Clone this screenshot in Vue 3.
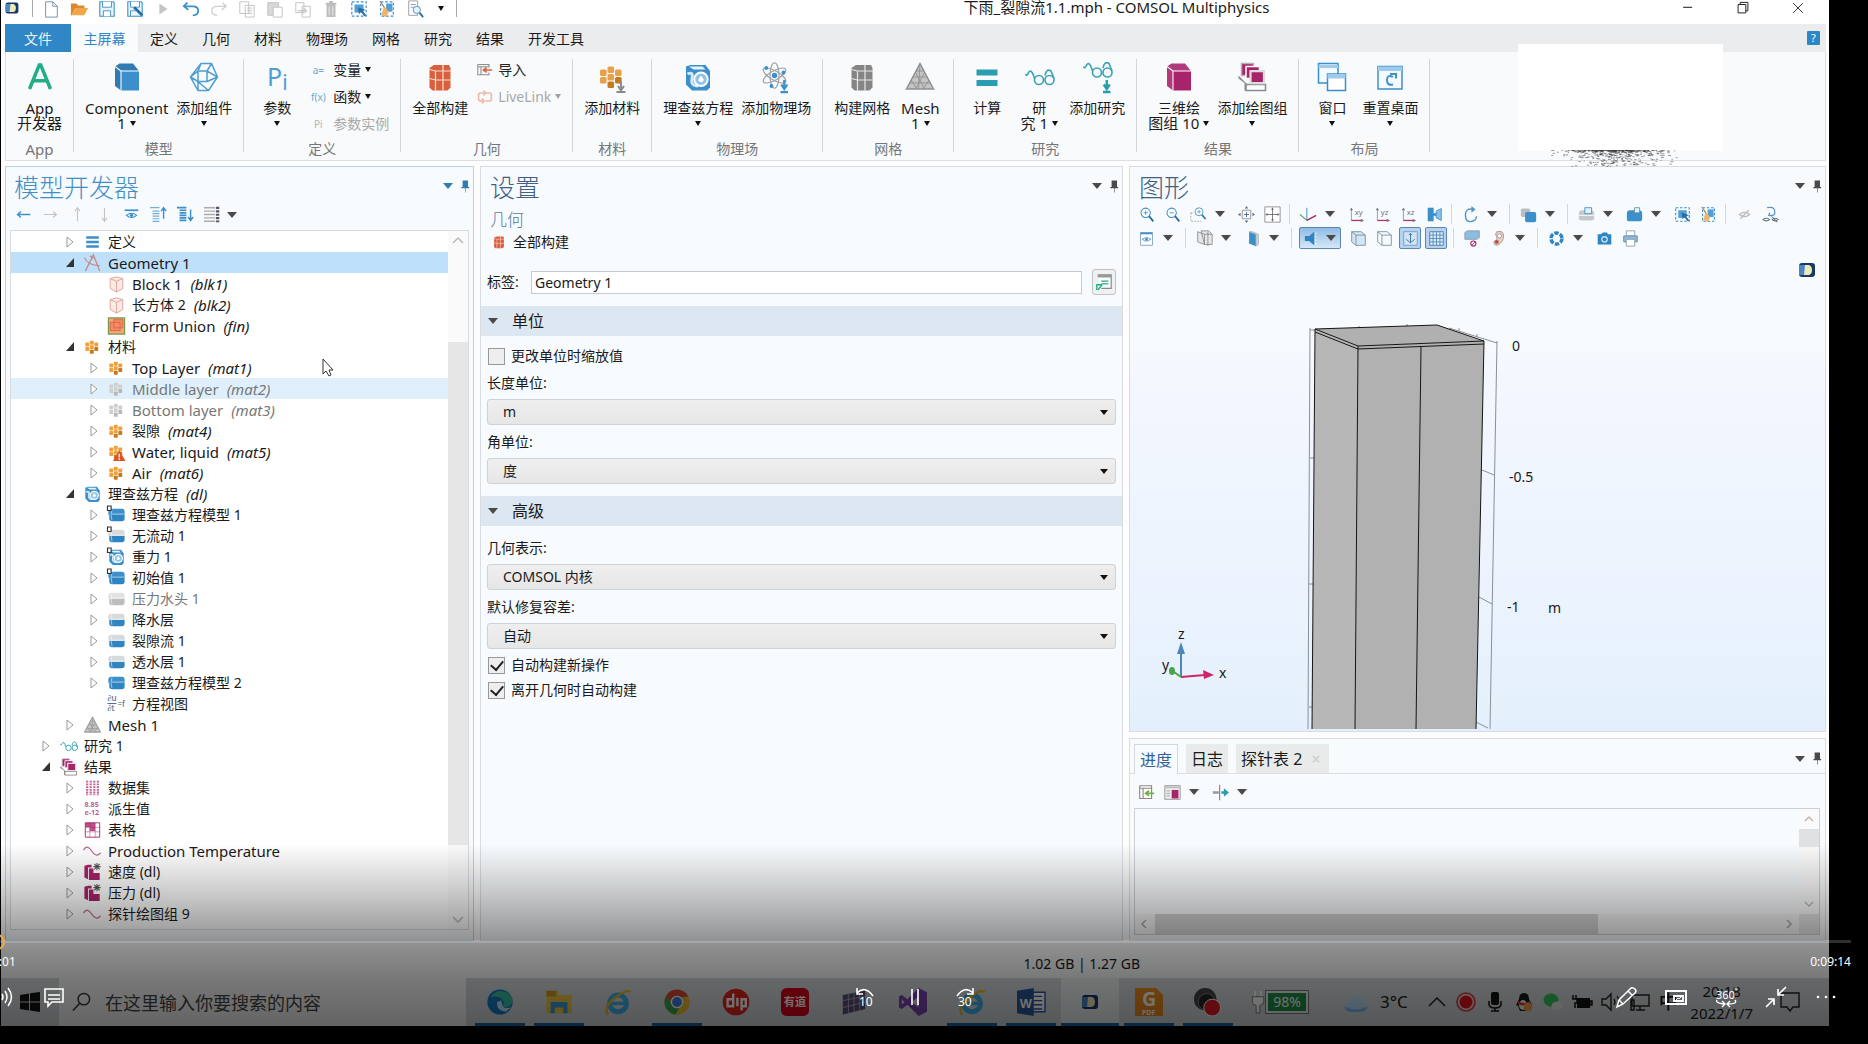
<script setup>
import { ref } from 'vue'

const B = '#3b8fcb'
const G = '#8a8a8a'
const M = '#a8246a'

const dots = (c, d) =>
  [[7, 3], [2, 5], [12, 5], [7, 8], [2, 10], [12, 10], [7, 13]]
    .map(([x, y], i) => `<rect x="${x}" y="${y}" width="4.4" height="4.4" rx="1" fill="${i > 4 ? d : c}"/>`)
    .join('')
const cube = (f, s) =>
  `<path d="M2 3l4 3v13l-4-3zM2 3l3-2h9l4 5H6z" fill="${s}"/><path d="M6 6h12v13H6z" fill="${f}"/><path d="M2 3l4 3v13M6 6h12" stroke="#fff" stroke-width=".7" fill="none"/>`
const grid = (c) =>
  `<path d="M3 4l3-2h10l1 2v13l-2 2H5l-2-2z" fill="${c}"/><path d="M3 5l4 1h10M7 6v13M12 2v17M7 12h10M3 11l4 1" stroke="#fff" stroke-opacity=".8" stroke-width=".8" fill="none"/>`
const tank = (top, bottom) =>
  `<path d="M1 6q0-3 3-3h12q3 0 3 3v4H1z" fill="${top}"/><path d="M2 10h17v4q0 3-3 3H5q-3 0-3-3z" fill="${bottom}"/><path d="M5 9h13M5 4q-2 5 0 12" stroke="#fff" stroke-opacity=".6" fill="none"/>`
const mark = '<path d="M0 0h4v5H0z" fill="#fff" stroke="#333" stroke-width="1.300"/>'
const globe =
  '<path d="M2 3l3-1h10l3 4v11l-2 2H6l-4-4z" fill="#3b8fcb"/><path d="M4 3h9l2 2H7z" fill="#e8f4fc"/><path d="M3 8q4-2 3 3t4 5" stroke="#d2e9f8" stroke-width="2" fill="none"/><circle cx="12" cy="11.500" r="4.500" fill="#8cc4ea" stroke="#fff" stroke-width="1.300"/><path d="M10 12l2-3 2 3q-2 3-4 0" fill="#fff"/>'
const mesh =
  '<path d="M10 1l9 17H1z" fill="#c4c4c4" stroke="#909090"/><path d="M7.500 6h5M5.500 10h9M3.500 14h13M7 7l6 11M4 12l4 6M13 7L7 18M16 12l-4 6M10 1l-1 17" stroke="#909090" stroke-width=".6" fill="none"/>'
const glasses = (c) =>
  `<g fill="none" stroke="${c}" stroke-width="1.100"><circle cx="10" cy="12" r="3"/><circle cx="17" cy="12" r="3"/><path d="M7 11Q5 4 3 7q-1 3-2 1M14 9q1-5 4-3l2 5"/></g>`
const stack =
  `<path d="M1 11l4 3v5h14v-4H7L1 9z" fill="${G}"/><path d="M6 15h13v4H6z" fill="#fff" stroke="${G}"/><path d="M3 1h8v8H3z" fill="${M}" stroke="#b9b0b5"/><path d="M6 3h9v8H6z" fill="${M}" stroke="#fff"/><path d="M9 6h9v8H9z" fill="${M}" stroke="#ddd" stroke-width="1.500"/>`
const select = `<path d="M2 2h16v16H2z" fill="none" stroke="${B}" stroke-width="1.300" stroke-dasharray="3 2"/><path d="M5 5h10v9H5z" fill="#4f9fd8"/><path d="M9 8l9 3-4 1 4 5-2 1-4-5-2 3z" fill="#2a6c9f"/>`
const broom = `<path d="M3 2h14v16H3z" fill="none" stroke="${B}" stroke-width="1.300" stroke-dasharray="3 2"/><path d="M9 4h7v9H9z" fill="#4f9fd8"/><path d="M3 1l4 6 5 6-3 6-5-3 2-7z" fill="#f0b565"/><path d="M2 1l5 7" stroke="#8a6a3a"/>`
const mag = (s) =>
  `<circle cx="9" cy="8" r="5.500" fill="#fff" stroke="${B}" stroke-width="1.200"/><path d="M13 12l5 6" stroke="#2d6f9f" stroke-width="2.200"/><path d="M6.500 8h5${s}" stroke="${B}" fill="none"/>`
const comsol =
  '<rect x="2" y="3" width="16" height="14" rx="3" fill="#17376f"/><path d="M2 5h6v10H2z" fill="#4b86c6"/><path d="M8 5h4q3 1 3 5t-3 5H7z" fill="#efeab4"/>'
const wave = `<path d="M0 9q4-7 9 1t10 2" fill="none" stroke="#b8668f" stroke-width="1.300"/>`
const plot = `<path d="M1 3l4 2v13l-4-2zM1 3l4-1h4v3H5z" fill="${M}"/><path d="M6 6h5v5h7v8H6z" fill="${M}"/><path d="M15 0v8M11 4h8M12 1l6 6M18 1l-6 6" stroke="#555" stroke-width="1.200"/>`
const axis = (t) =>
  `<path d="M4 3v14" stroke="#5a9fce"/><path d="M4 17h12" stroke="#b0306a" stroke-width="1.500"/><path d="M2 5l2-3 2 3zM15 15l4 2-4 2z" fill="#777"/><text x="8" y="11" font-size="9" font-family="Noto Sans" fill="#777">${t}</text>`
const box3 = (o) =>
  `<path d="M2 2h11l5 4v12H7l-5-4z" fill="${o ? '#d5e6f3' : 'none'}" stroke="#6c8ba4"/><path d="M2 2l5 4h11M7 6v12" fill="none" stroke="#6c8ba4"/>`
const ie =
  '<circle cx="10" cy="11" r="6" fill="none" stroke="#3fb0e8" stroke-width="3.500"/><path d="M5 11h12" stroke="#3fb0e8" stroke-width="2.500"/><path d="M3 19Q-1 14 8 7t11-4" fill="none" stroke="#e8b92c" stroke-width="1.700"/>'

const icons = {
  comsol,
  newf: '<path d="M4 2h8l5 5v12H4z" fill="#fff" stroke="#6c8ba4"/><path d="M12 2v5h5" fill="none" stroke="#6c8ba4"/>',
  open: '<path d="M1 4h6l2 2h7v3H6L2 17H1z" fill="#d98a2c"/><path d="M6 9h14l-4 8H2z" fill="#f2a649"/>',
  save: `<path d="M2 2h15l1 1v15H2z" fill="#e8f3fb" stroke="${B}" stroke-width="1.200"/><path d="M5 2v6h10V2M6 18v-6h8v6" fill="#fff" stroke="${B}"/>`,
  saveas: `<path d="M2 2h15l1 1v15H2z" fill="#e8f3fb" stroke="${B}" stroke-width="1.200"/><path d="M5 2v6h10V2M5 18v-6h6" fill="#fff" stroke="${B}"/><path d="M9 8l9 9" stroke="#2a6c9f" stroke-width="3"/>`,
  play: '<path d="M6 4l9 6-9 6z" fill="#c4c4c4"/>',
  undo: `<path d="M6 3L2 7l5 4M2 7h10q6 0 6 5t-6 5" fill="none" stroke="${B}" stroke-width="2"/>`,
  redo: '<path d="M14 3l4 4-5 4M18 7H8q-6 0-6 5t6 5" fill="none" stroke="#d0d0d0" stroke-width="1.500"/>',
  copy: '<path d="M2 2h10v13H2zM8 6h10v13H8z" fill="#fff" stroke="#c0c0c0"/><path d="M10 9h6M10 12h6M10 15h6" stroke="#c0c0c0"/>',
  paste: '<path d="M2 3h12v14H2z" fill="#d8d8d8" stroke="#c0c0c0"/><path d="M8 8h10v11H8z" fill="#fff" stroke="#c0c0c0"/>',
  dup: '<path d="M2 3h9v11H2zM9 7h9v12H9z" fill="#fff" stroke="#c0c0c0"/><path d="M4 12h10M11 9l3 3-3 3" fill="none" stroke="#b0b0b0"/>',
  trash: '<path d="M5 5h10v14H5zM4 3h12v2H4zM8 1h4v2H8z" fill="#bdbdbd"/><path d="M8 7v10M12 7v10" stroke="#eee"/>',
  select,
  broom,
  find: `<path d="M3 1h10v16H3z" fill="#fff" stroke="#999"/><path d="M5 5h6M5 8h4" stroke="#999"/><circle cx="12" cy="11" r="4" fill="#e8f3fb" stroke="${B}"/><path d="M15 14l4 5" stroke="#2a6c9f" stroke-width="2"/>`,
  appA: '<path d="M3 18L9.500 2h1L17 18M5.500 12.500h9" fill="none" stroke="#21ad86" stroke-width="2.300"/>',
  cubeB: cube(B, '#2f7cb5'),
  cubeM: cube(M, '#b23a7c'),
  wire: '<path d="M1 10l7-9h7l4 9-6 9H6z M1 10l5-4 6 0 7 4M6 6l2-5M12 6l3-5M6 6v7l7 6M6 13l6 0V6M1 10l5 3M12 13l7-3M6 19v-6" fill="none" stroke="#4d9ed2" stroke-width="1"/>',
  gridR: grid('#d95f3d'),
  gridG: grid('#858585'),
  importI: '<path d="M1 3h14v4M1 3v13h14v-3M1 6h14M5 6v10" fill="none" stroke="#8a8a8a" stroke-width="1.300"/><path d="M19 10H9M12 7l-4 3 4 3" fill="none" stroke="#d95f3d" stroke-width="2"/>',
  link: '<path d="M9 5H4q-2 0-2 3v4q0 3 2 3h4M6 12l3 3-3 3M11 5h5q2 0 2 3v4q0 3-2 3h-5M8 2l3 3-3 3" fill="none" stroke="#f0b8a8" stroke-width="2"/>',
  mat: dots('#efa03c', '#c67a1f'),
  matG: dots('#cfcfcf', '#b8b8b8'),
  matW: dots('#efa03c', '#c67a1f') + '<path d="M13 8l7 12H6z" fill="#dd5524"/><path d="M13 12v4M13 17v2" stroke="#fff" stroke-width="1.400"/>',
  matAdd: dots('#e8a04a', '#c67a1f') + `<path d="M16 13v5M14 16l2 3 2-3M13 20h6" fill="none" stroke="${G}" stroke-width="1.300"/>`,
  globe,
  globeD: globe + mark,
  atom: `<g fill="none" stroke="#a0a0a8" stroke-width=".8"><ellipse cx="9" cy="9" rx="3" ry="8.500"/><ellipse cx="9" cy="9" rx="3" ry="8.500" transform="rotate(60 9 9)"/><ellipse cx="9" cy="9" rx="3" ry="8.500" transform="rotate(-60 9 9)"/></g><circle cx="9" cy="9" r="1.800" fill="${B}"/><circle cx="3.500" cy="4" r="1.300" fill="${B}"/><circle cx="15" cy="7" r="1.300" fill="${B}"/><circle cx="7" cy="16" r="1.300" fill="${B}"/><path d="M15.500 12v5M13.500 15l2 3 2-3M13 20h5" fill="none" stroke="${B}" stroke-width="1.500"/>`,
  mesh,
  equals: '<path d="M3 5h14v4H3zM3 12h14v4H3z" fill="#2b9db0"/>',
  glasses: glasses('#3aa3b5'),
  glassesAdd: `<g transform="translate(0 -5)">${glasses('#3aa3b5')}</g><path d="M16.500 12v5M14.500 15l2 3 2-3M14 20h5" fill="none" stroke="#2b9db0" stroke-width="1.600"/>`,
  stack,
  windows: `<path d="M1 1h13v13H1z" fill="#f4faff" stroke="${B}"/><path d="M1 2h13v2H1z" fill="#9fcbea"/><path d="M7 8h12v11H7z" fill="#fff" stroke="${B}"/><path d="M7 8h12v3H7z" fill="#9fcbea"/>`,
  resetW: `<path d="M2 3h16v15H2z" fill="#f4faff" stroke="${B}"/><path d="M2 3h16v3H2z" fill="#9fcbea"/><path d="M12 10q-4-2-4 2t4 3M10 8h4v3" fill="none" stroke="${B}" stroke-width="1.300"/>`,
  left: `<path d="M18 10H3M7 6.500L3 10l4 3.500" fill="none" stroke="${B}" stroke-width="1.600"/>`,
  right: '<path d="M2 10h15M13 6.500l4 3.500-4 3.500" fill="none" stroke="#c4c4c4" stroke-width="1.300"/>',
  up: '<path d="M10 18V3M7 6l3-4 3 4" fill="none" stroke="#c4c4c4" stroke-width="1.300"/>',
  down: '<path d="M10 2v15M7 14l3 4 3-4" fill="none" stroke="#c4c4c4" stroke-width="1.300"/>',
  eye: `<path d="M2 5h16" stroke="${B}" stroke-width="2"/><path d="M4 11q6-5 12 0-6 5-12 0z" fill="none" stroke="${B}" stroke-width="1.300"/><circle cx="10" cy="11" r="2" fill="${B}"/>`,
  listUp: `<path d="M0 2h11M3 6h8M3 9h8M3 12h8M3 15h8M3 18h8" stroke="${B}" stroke-width="1.400" stroke-opacity=".7"/><path d="M16 15V3M13 6l3-4 3 4" fill="none" stroke="${B}" stroke-width="1.700"/>`,
  listDown: `<path d="M0 2h11M3 5h8M3 8h8M3 11h8M3 14h8M3 17h8" stroke="${B}" stroke-width="2"/><path d="M16 4v13M13 13l3 4 3-4" fill="none" stroke="${B}" stroke-width="1.700"/>`,
  cols: '<path d="M0 2h13M0 6h13M0 10h13M0 14h13M0 18h13" stroke="#aaa" stroke-width="1.600"/><path d="M16 1v18" stroke="#556" stroke-width="4" stroke-dasharray="2.500 1.500"/>',
  defs: `<path d="M3 5h14M3 10h14M3 15h14" stroke="${B}" stroke-width="3"/>`,
  geom: '<path d="M2 19L11 1l7 18M1 4q3 8 17 9M7 2l4 3" fill="none" stroke="#c48a8a" stroke-width="1.400"/>',
  block: '<path d="M3 4l7-2 7 2v11l-7 4-7-4z" fill="#fbe9e4" stroke="#dba396"/><path d="M3 4l7 3 7-3M10 7v12" fill="none" stroke="#dba396"/>',
  union: '<path d="M1 1h18v18H1z" fill="#f5a376" stroke="#7a9a4a" stroke-width="1.300"/><path d="M3 6h11v9H3zM7 3h10v9H7z" fill="#f58b68" stroke="#d9673f"/>',
  tankB: tank(B, '#2f84c2'),
  tankBD: tank(B, '#2f84c2') + mark,
  tankH: tank('#d6dadd', '#2f84c2'),
  tankHD: tank('#d6dadd', '#2f84c2') + mark,
  tankG: tank('#e2e2e2', '#bdbdbd'),
  equ: '<g font-family="Noto Sans" font-size="9" fill="#2e5a8c"><text x="0" y="7">∂u</text><text x="0" y="18">∂t</text><text x="11" y="13">=f</text></g><path d="M0 9.500h10" stroke="#2e5a8c"/>',
  data: `<path d="M4 2v16M8 2v16M12 2v16M16 2v16" stroke="${M}" stroke-width="2.500" stroke-dasharray="2 1" stroke-opacity=".7"/>`,
  derived: `<g font-family="Noto Sans" font-weight="700" font-size="8" fill="${M}" fill-opacity=".75"><text x="1" y="8">8.85</text><text x="1" y="17">e-12</text></g>`,
  table: `<path d="M2 2h16v16H2z" fill="#fff" stroke="${M}"/><path d="M2 2h11v9H7v-4H2z" fill="${M}" fill-opacity=".8"/><path d="M2 7h16M2 12h16M7 2v16M13 2v16" stroke="${M}" stroke-opacity=".5"/>`,
  wave,
  plot,
  zin: mag('M9 5.500v5'),
  zout: mag(''),
  zbox: `<path d="M1 8v10h12M1 8h4" fill="none" stroke="#999" stroke-dasharray="2 1.500"/>` + `<g transform="translate(3 0) scale(.85)">${mag('M9 5.500v5')}</g>`,
  extents: '<path d="M5 5h10v10H5z" fill="none" stroke="#888"/><path d="M10 7v6M7 10h6" stroke="#3b6a9a"/><path d="M8 3l2-3 2 3zM8 17l2 3 2-3zM3 8l-3 2 3 2zM17 8l3 2-3 2z" fill="#667"/>',
  fit: '<path d="M1 1h18v18H1z" fill="#fff" stroke="#888"/><path d="M10 2v16M2 10h16" stroke="#667"/><path d="M8 4l2-2 2 2zM8 16l2 2 2-2zM4 8l-2 2 2 2zM16 8l2 2-2 2z" fill="#667"/>',
  axes: `<path d="M8 2v15" stroke="#5a9fce" stroke-width="1.300"/><path d="M8 17L0 10" stroke="#5aa35a" stroke-width="1.300"/><path d="M8 17l11-6" stroke="${M}" stroke-width="1.600"/>`,
  xy: axis('xy'),
  yz: axis('yz'),
  xz: axis('xz'),
  proj: `<path d="M2 2h7v16H2z" fill="${B}"/><path d="M8 10h5" stroke="${B}" stroke-width="3"/><path d="M12 6l6-3v14l-6-3z" fill="#8cc0e6" stroke="${B}"/>`,
  rot: '<path d="M13 4Q4 2 4 11t8 7q5-1 5-6" fill="none" stroke="#5796c2" stroke-width="1.700"/><path d="M11 0l5 4-5 4z" fill="#5796c2"/>',
  layers: `<rect x="1" y="3" width="11" height="10" rx="2" fill="#b9bec3"/><rect x="6" y="7" width="13" height="12" rx="2" fill="${B}"/>`,
  boxG: '<path d="M1 9q0-4 4-4h10q4 0 4 4v6q0 2-3 2H4q-3 0-3-2z" fill="#c3c9ce"/><path d="M1 11h18" stroke="#fff"/><path d="M8 2h8v7H8z" fill="#e4f1fa" stroke="#3b8fcb"/>',
  boxB: `<path d="M1 9q0-4 4-4h10q4 0 4 4v6q0 3-3 3H4q-3 0-3-3z" fill="${B}"/><path d="M10 2h6v6h-6z" fill="#e4f1fa" stroke="#6c8ba4"/>`,
  eyeX: '<path d="M4 10q6-5 12 0-6 5-12 0zM5 15L15 5" fill="none" stroke="#bbb" stroke-width="1.500"/>',
  eyeR: '<path d="M6 2q8-2 9 4t-6 5M9 8l-1 3 4 1" fill="none" stroke="#5796c2" stroke-width="1.500"/><path d="M1 16q4-3 8 0-4 3-8 0zM12 16q3-3 7 0-4 3-7 0zM12 13l6 6" fill="none" stroke="#678" stroke-width="1.200"/>',
  eyeW: `<path d="M3 3h14v15H3z" fill="#fff" stroke="#7a9ab4"/><path d="M3 4h14" stroke="${B}" stroke-width="2"/><path d="M5 11q5-4 10 0-5 4-10 0z" fill="none" stroke="${B}"/><circle cx="10" cy="11" r="1.500" fill="${B}"/>`,
  cut: '<path d="M2 2l8 3v12l-8-3zM6 1h9l4 4v12h-9z" fill="#dcdfe2" fill-opacity=".7" stroke="#888"/><path d="M10 5h9M14 2v17" stroke="#888"/>',
  slab: `<path d="M6 2l8 3v14l-8-3z" fill="${B}"/><path d="M6 2h4l7 3v12l-3 2V5z" fill="#c8d4de" stroke="#999" stroke-width=".6"/>`,
  speaker: `<path d="M1 7h5l6-5v16l-6-5H1z" fill="#2f84c2"/><path d="M14 3v14" stroke="#fff" stroke-dasharray="2 2"/>`,
  boxS: box3(true),
  boxW: box3(false),
  triA: '<path d="M2 2h16v16H2z" fill="#cfe4f6" stroke="#7899b8"/><path d="M10 4v11M10 15l-5-4M10 15l5-4M8 6l2-2 2 2" fill="none" stroke="#3b6a9a"/>',
  gridA: '<path d="M2 2h16v16H2z" fill="#d9eafa" stroke="#55779a"/><path d="M2 6h16M2 10h16M2 14h16M6 2v16M10 2v16M14 2v16" stroke="#4d86b8"/>',
  clip: `<path d="M1 3l3-2h14v8l-3 2H1z" fill="#8cbce0" stroke="#8a9aa8"/><circle cx="11" cy="16" r="3" fill="#fff" stroke="${M}" stroke-width="1.300"/><path d="M9 18l4-4" stroke="${M}"/>`,
  ring: '<path d="M8 2q8-2 8 5t-7 11q-6 0-4-5 4-1 3-5-3-3 0-6z" fill="#e2cfc8" stroke="#a9918a"/><circle cx="11" cy="7" r="2.500" fill="#fff" stroke="#a9918a"/><circle cx="8" cy="14" r="2.300" fill="#c8463c"/>',
  lens: `<circle cx="10" cy="10" r="6.500" fill="none" stroke="#2f84c2" stroke-width="4" stroke-dasharray="5.200 1.600"/>`,
  camera: `<path d="M2 5h4l2-2h5l1 2h4v12H2z" fill="#2f84c2"/><circle cx="10" cy="11" r="4" fill="#bfe0f5"/><circle cx="10" cy="11" r="2.300" fill="#2f84c2"/>`,
  print: '<path d="M5 1h10v6H5z" fill="#fff" stroke="#89a"/><path d="M2 7h16v7H2z" fill="#8fb9da" stroke="#689"/><path d="M5 11h10v8H5z" fill="#fff" stroke="#89a"/>',
  panIn: '<path d="M2 2h14v15H2zM2 5h14M6 5v12" fill="#fff" stroke="#888" stroke-width="1.300"/><path d="M19 11h-9M13 8l-4 3 4 3" fill="none" stroke="#6cb33f" stroke-width="2"/>',
  panM: `<path d="M1 2h18v16H1z" fill="#eee" stroke="#888"/><path d="M2 4h16" stroke="#bbb" stroke-width="2"/><path d="M9 7h8v10H9z" fill="${M}"/><path d="M3 8h4M3 11h4M3 14h4" stroke="#999"/>`,
  pipe: '<path d="M1 10h7" stroke="#999" stroke-width="3"/><path d="M9 1v18" stroke="#777" stroke-width="1.200"/><path d="M11 10h5" stroke="#2b9db0" stroke-width="3"/><path d="M14 5l6 5-6 5z" fill="#2b9db0"/>',
  pageBtn: '<path d="M3 2h15v15H7" fill="#fff" stroke="#888" stroke-width="1.300"/><path d="M3 2h15v3H3z" fill="#999"/><path d="M7 9h8M7 12h8" stroke="#21ad86" stroke-width="1.400"/><path d="M2 19v-6h6M3 19l5-6" fill="none" stroke="#21ad86" stroke-width="1.500"/>',
  pin: '<path d="M6 0h9v11h2v2h-6v7h-1v-7H4v-2h2z" fill="currentColor"/>',
  edge: '<circle cx="10" cy="10" r="9" fill="#1579c4"/><path d="M3 7Q7 0 14 3t4 9q-3 3-6 1 2-4-2-6T3 7z" fill="#35c3a0"/><path d="M8 10q-1 6 6 7l4-3q-5 1-6-1t-1-4z" fill="#bfe2f5"/>',
  folder: '<path d="M1 2h8l1 3h9v13H1z" fill="#f2c744"/><path d="M1 2h7v4H1z" fill="#cf9a20"/><path d="M4 18v-8h12v8h-3v-4H7v4z" fill="#3a9bd8"/>',
  ie,
  chrome: '<circle cx="10" cy="10" r="9" fill="#e9bd2f"/><path d="M2 6a9 9 0 0 1 16 0l-8 1-3 5z" fill="#d84a38"/><path d="M2 6a9 9 0 0 0 7 13l3-6-5-1z" fill="#38a352"/><circle cx="10" cy="10" r="4" fill="#3c7de0" stroke="#fff"/>',
  dip: '<circle cx="10" cy="10" r="9.500" fill="#e2231a"/><path d="M8 4v9H4V8h4M11 7v6M14 16V8h3v5h-3" fill="none" stroke="#fff" stroke-width="1.700"/>',
  youdao: '<rect x="0" y="0" width="20" height="20" rx="4" fill="#d9001b"/><text x="2" y="13" font-family="Noto Sans CJK SC" font-weight="700" font-size="8" fill="#fff">有道</text>',
  matrix: '<path d="M2 5l16-3v13L2 19z" fill="#5a4f76"/><path d="M2 9l16-3M2 14l16-4M6 4v14M10 3v14M14 3v13" stroke="#b9b3c8" stroke-width=".6"/>',
  vs: '<path d="M14 0l6 3v14l-6 3-8-8-4 3-2-1V6l2-1 4 3z" fill="#7b43b0"/><path d="M14 6v8l-5-4zM2 8v4l2-2z" fill="#d9cfe8"/>',
  word: '<path d="M10 3h10v14H10z" fill="#fff" stroke="#2b579a"/><path d="M12 6h6M12 9h6M12 12h6M12 15h6" stroke="#2b579a"/><path d="M0 2l12-2v20L0 18z" fill="#2b579a"/><text x="2" y="14" font-family="Noto Sans" font-weight="700" font-size="9" fill="#fff">W</text>',
  foxit: '<path d="M0 0h15l5 5v15H0z" fill="#ef8a1d"/><text x="5" y="13" font-family="Noto Sans" font-weight="700" font-size="14" fill="#fff">G</text><text x="5" y="19" font-family="Noto Sans" font-weight="700" font-size="5" fill="#fff">PDF</text>',
  rec: '<circle cx="8" cy="8" r="8" fill="#444"/><circle cx="9" cy="10" r="6" fill="#222" stroke="#888" stroke-width=".6"/><circle cx="13" cy="14" r="6" fill="#e01b24" stroke="#fff" stroke-width=".7"/>',
  win: '<path d="M0 3l9-1.500V9.500H0zM10 1.300L20 0v9.500H10zM0 10.500h9v8L0 17zM10 10.500h10V20l-10-1.500z" fill="#111"/>',
  search: '<circle cx="12.500" cy="7" r="6" fill="none" stroke="#333" stroke-width="1.500"/><path d="M8 11.500L1 19" stroke="#333" stroke-width="1.600"/>',
  plug: '<path d="M7 0v6M13 0v6" stroke="#fff" stroke-width="2"/><path d="M4 6h12v5q0 4-4 4v8H8v-8q-4 0-4-4z" fill="#fff" stroke="#777"/>',
  cloud: '<path d="M2 13q0-4 4-4 1-5 6-4 4 0 4 5 4 1 3 4-2 3-6 3H5q-3-1-3-4z" fill="#b8dcf6"/><path d="M2 13q8 4 17 0-1 4-6 4H5q-3-1-3-4z" fill="#7fb6e6"/>',
  chev: '<path d="M2 14l8-8 8 8" fill="none" stroke="#222" stroke-width="1.500"/>',
  red: '<circle cx="10" cy="10" r="9" fill="none" stroke="#e6393f" stroke-width="1.600"/><circle cx="10" cy="10" r="6.500" fill="#e60f1a"/>',
  mic: '<rect x="6" y="0" width="8" height="13" rx="2" fill="#111"/><path d="M4 9v3q0 4 6 4t6-4V9M10 16v3M6 19h8" fill="none" stroke="#111" stroke-width="1.500"/>',
  qq: '<path d="M10 1q5 0 5 6l3 6-2 1-2 5H6l-2-5-2-1 3-6q0-6 5-6z" fill="#1b1b1b"/><ellipse cx="9" cy="13" rx="4" ry="5" fill="#eee"/><path d="M4 9q6 4 12 0v3q-6 3-12 0z" fill="#e0342b"/><circle cx="14" cy="15" r="4.500" fill="#f0a050"/>',
  wechat: '<ellipse cx="8" cy="8" rx="7.500" ry="6.500" fill="#35c35a"/><ellipse cx="14" cy="14" rx="5.500" ry="4.500" fill="#e4e9e6"/>',
  batt: '<path d="M5 6h13v10H5z" fill="#111"/><path d="M18 9h2v4h-2zM1 3v4M4 3v4M0 7h5v4H3v5" stroke="#111" fill="none" stroke-width="1.500"/>',
  vol: '<path d="M1 7h4l5-5v16l-5-5H1z" fill="none" stroke="#222" stroke-width="1.400"/><path d="M13 7q2 3 0 6M16 4q4 6 0 12" fill="none" stroke="#222" stroke-width="1.300"/>',
  screen: '<path d="M2 3h17v11H2zM10 14v4M6 18h9M1 8h3v10H1z" fill="none" stroke="#222" stroke-width="1.400"/>',
  note: '<path d="M1 1h18v14h-6l-3 4-3-4H1z" fill="none" stroke="#222" stroke-width="1.400"/>',
  pSound: '<path d="M0 4h5v12H0z" fill="none" stroke="#fff" stroke-width="1.500"/><path d="M8 7q2 3 0 6M11 4q4 6 0 12M14 1q7 9 0 18" fill="none" stroke="#fff" stroke-width="1.500"/>',
  pSub: '<path d="M1 2h18v13H8l-4 4v-4H1z" fill="none" stroke="#fff" stroke-width="1.600"/><path d="M4 8h12M4 12h12" stroke="#fff" stroke-width="1.600"/>',
  pBack: '<path d="M2 1v6h6M2 6q8-8 16 3" fill="none" stroke="#fff" stroke-width="1.600"/><text x="4" y="19" font-family="Noto Sans" font-size="12" fill="#fff">10</text>',
  pFwd: '<path d="M18 1v6h-6M18 6Q10-2 2 9" fill="none" stroke="#fff" stroke-width="1.600"/><text x="3" y="19" font-family="Noto Sans" font-size="12" fill="#fff">30</text>',
  pPause: '<path d="M7 2v16M13 2v16" stroke="#fff" stroke-width="1.600"/>',
  pPen: '<path d="M1 20l2-7L15 1q2-1 4 1t0 4L7 17zM12 4l4 4M3 13l4 4" fill="none" stroke="#fff" stroke-width="1.500"/>',
  pPip: '<path d="M0 4h20v13H0z" fill="none" stroke="#fff" stroke-width="2"/><path d="M8 9h9v5H8z" fill="none" stroke="#fff" stroke-width="1.800"/><path d="M10 13l2-2 1 1 2-2" stroke="#fff" fill="none"/>',
  p360: '<text x="0" y="12" font-family="Noto Sans" font-size="11" fill="#fff">360</text><circle cx="20" cy="2" r="1.200" fill="none" stroke="#fff" stroke-width=".7"/><path d="M1 13q-2 3 7 4M19 13q3 4-7 4M14 14l-3 3 3 3M6 14l3 3-3 3" fill="none" stroke="#fff" stroke-width="1.400"/>',
  pShrink: '<path d="M20 0l-8 8M12 2v6h6M0 20l8-8M8 18v-6H2" fill="none" stroke="#fff" stroke-width="1.700"/>',
  pDots: '<circle cx="2" cy="10" r="1.300" fill="#fff"/><circle cx="10" cy="10" r="1.300" fill="#fff"/><circle cx="18" cy="10" r="1.300" fill="#fff"/>',
}

const quick = ['newf', 'open', 'save', 'saveas', 'play', 'undo', 'redo', 'copy', 'paste', 'dup', 'trash', 'select', 'broom', 'find']
const tabs = ['定义', '几何', '材料', '物理场', '网格', '研究', '结果', '开发工具']

const groups = [
  { name: 'App', big: [{ i: 'appA', a: 'App', b: '开发器' }] },
  { name: '模型', big: [{ i: 'cubeB', a: 'Component', b: '1', c: 1 }, { i: 'wire', a: '添加组件', c: 1 }] },
  {
    name: '定义',
    big: [{ t: 'Pi', a: '参数', c: 1 }],
    small: [{ t: 'a=', a: '变量', c: 1 }, { t: 'f(x)', a: '函数', c: 1 }, { t: 'Pi', a: '参数实例', off: 1 }],
  },
  {
    name: '几何',
    big: [{ i: 'gridR', a: '全部构建' }],
    small: [{ i: 'importI', a: '导入' }, { i: 'link', a: 'LiveLink', c: 1, off: 1 }],
  },
  { name: '材料', big: [{ i: 'matAdd', a: '添加材料' }] },
  { name: '物理场', big: [{ i: 'globe', a: '理查兹方程', c: 1 }, { i: 'atom', a: '添加物理场' }] },
  { name: '网格', big: [{ i: 'gridG', a: '构建网格' }, { i: 'mesh', a: 'Mesh', b: '1', c: 1 }] },
  { name: '研究', big: [{ i: 'equals', a: '计算' }, { i: 'glasses', a: '研', b: '究 1', c: 1 }, { i: 'glassesAdd', a: '添加研究' }] },
  { name: '结果', big: [{ i: 'cubeM', a: '三维绘', b: '图组 10', c: 1 }, { i: 'stack', a: '添加绘图组', c: 1 }] },
  { name: '布局', big: [{ i: 'windows', a: '窗口', c: 1 }, { i: 'resetW', a: '重置桌面', c: 1 }] },
]

const treeTools = ['left', 'right', 'up', 'down', 'eye', 'listUp', 'listDown', 'cols']

// [level, arrow ('>' closed, 'v' open), icon, label, tag, state]
const tree = [
  [1, '>', 'defs', '定义'],
  [1, 'v', 'geom', 'Geometry 1', '', 'selected'],
  [2, '', 'block', 'Block 1', '(blk1)'],
  [2, '', 'block', '长方体 2', '(blk2)'],
  [2, '', 'union', 'Form Union', '(fin)'],
  [1, 'v', 'mat', '材料'],
  [2, '>', 'mat', 'Top Layer', '(mat1)'],
  [2, '>', 'matG', 'Middle layer', '(mat2)', 'off hover'],
  [2, '>', 'matG', 'Bottom layer', '(mat3)', 'off'],
  [2, '>', 'mat', '裂隙', '(mat4)'],
  [2, '>', 'matW', 'Water, liquid', '(mat5)'],
  [2, '>', 'mat', 'Air', '(mat6)'],
  [1, 'v', 'globe', '理查兹方程', '(dl)'],
  [2, '>', 'tankBD', '理查兹方程模型 1'],
  [2, '>', 'tankHD', '无流动 1'],
  [2, '>', 'globeD', '重力 1'],
  [2, '>', 'tankBD', '初始值 1'],
  [2, '>', 'tankG', '压力水头 1', '', 'off'],
  [2, '>', 'tankH', '降水层'],
  [2, '>', 'tankH', '裂隙流 1'],
  [2, '>', 'tankH', '透水层 1'],
  [2, '>', 'tankB', '理查兹方程模型 2'],
  [2, '', 'equ', '方程视图'],
  [1, '>', 'mesh', 'Mesh 1'],
  [0, '>', 'glasses', '研究 1'],
  [0, 'v', 'stack', '结果'],
  [1, '>', 'data', '数据集'],
  [1, '>', 'derived', '派生值'],
  [1, '>', 'table', '表格'],
  [1, '>', 'wave', 'Production Temperature'],
  [1, '>', 'plot', '速度 (dl)'],
  [1, '>', 'plot', '压力 (dl)'],
  [1, '>', 'wave', '探针绘图组 9'],
].map(([level, arrow, icon, label, tag, state]) => ({
  level, arrow, icon, label, tag, state, latin: /^[A-Z]/.test(label),
}))

// 'v' is a drop-down arrow, '|' a divider, a leading '*' a pressed button
const rowA = 'zin zout zbox v extents fit | axes v xy yz xz proj | rot v | layers v | boxG v boxB v select broom | eyeX eyeR'.split(' ')
const rowB = 'eyeW v | cut v slab v | *speaker boxS boxW *triA *gridA | clip ring v | lens v camera print'.split(' ')

const apps = [
  ['edge', 1], ['folder', 1], ['ie'], ['chrome', 1], ['dip'], ['youdao'], ['matrix'], ['vs'],
  ['ie', 1], ['word', 1], ['comsol', 1, 1], ['foxit', 1], ['rec', 1],
]
const tray = ['chev', 'red', 'mic', 'qq', 'wechat', 'batt', 'vol', 'screen']

const label = ref('Geometry 1')
const scaleUnits = ref(false)
const autoBuild = ref(true)
const autoLeave = ref(true)

let seed = 7
const rnd = () => (seed = (seed * 16807) % 2147483647) / 2147483647
const specks = Array.from({ length: 420 }, () => {
  const x = 95 + (rnd() + rnd() + rnd() - 1.5) * 48
  return { x, y: Math.pow(rnd(), 3) * 16, w: 1 + rnd() * 2 }
})
</script>

<template>
  <div class="screen">
    <div class="app">
      <header class="titlebar">
        <svg class="logo" viewBox="0 0 20 20" v-html="icons.comsol" />
        <nav class="quick">
          <button v-for="q in quick" :key="q" :aria-label="q"><svg viewBox="0 0 20 20" v-html="icons[q]" /></button>
          <i class="caret"></i>
        </nav>
        <h1>下雨_裂隙流1.1.mph - COMSOL Multiphysics</h1>
        <div class="winctl">
          <button aria-label="minimize"><svg viewBox="0 0 20 20"><path d="M3 9h13" stroke="#222" stroke-width="1.500" /></svg></button>
          <button aria-label="restore"><svg viewBox="0 0 20 20"><path d="M3 5h11v12H3zM6 5V2h11v12h-3" fill="none" stroke="#222" stroke-width="1.400" /></svg></button>
          <button aria-label="close"><svg viewBox="0 0 20 20"><path d="M3 3l14 14M17 3L3 17" stroke="#222" stroke-width="1.300" /></svg></button>
        </div>
      </header>

      <nav class="tabs">
        <button class="file">文件</button>
        <button class="home">主屏幕</button>
        <button v-for="t in tabs" :key="t">{{ t }}</button>
        <button class="help">?</button>
      </nav>

      <section class="ribbon">
        <div v-for="g in groups" :key="g.name" class="group">
          <div class="tools">
            <button v-for="b in g.big" :key="b.a" class="big">
              <span v-if="b.t" class="glyph">P<small>i</small></span>
              <svg v-else viewBox="0 0 20 20" v-html="icons[b.i]" />
              <span :class="{ latin: /^[A-Z]/.test(b.a) }">{{ b.a }}</span>
              <span class="line2">{{ b.b }}<i v-if="b.c" class="caret"></i></span>
            </button>
            <div v-if="g.small" class="smalls">
              <button v-for="s in g.small" :key="s.a" class="small" :class="{ off: s.off }">
                <span v-if="s.t" class="tiny">{{ s.t }}</span>
                <svg v-else viewBox="0 0 20 20" v-html="icons[s.i]" />
                <span>{{ s.a }}</span>
                <i v-if="s.c" class="caret"></i>
              </button>
            </div>
          </div>
          <div class="gname" :class="{ latin: g.name === 'App' }">{{ g.name }}</div>
        </div>
        <div class="mask">
          <svg viewBox="0 0 205 124">
            <rect width="205" height="107" fill="#fff" />
            <rect v-for="(s, n) in specks" :key="n" :x="s.x" :y="s.y + 106" :width="s.w" height="1" fill="#333" fill-opacity=".5" />
          </svg>
        </div>
      </section>

      <main class="work">
        <section class="panel model">
          <header class="phead">
            <h2>模型开发器</h2>
            <span class="dock"><i class="caret wide"></i><svg viewBox="0 0 20 20" v-html="icons.pin" /></span>
          </header>
          <div class="ttools">
            <button v-for="t in treeTools" :key="t" :aria-label="t"><svg viewBox="0 0 20 20" v-html="icons[t]" /></button>
            <i class="caret wide"></i>
          </div>
          <div class="treebox">
            <ul>
              <li v-for="(n, k) in tree" :key="k" :class="[n.state, 'l' + n.level]">
                <svg class="arrow" viewBox="0 0 16 16">
                  <path v-if="n.arrow === '>'" d="M5 3l6 5-6 5z" fill="#fff" stroke="#999" />
                  <path v-if="n.arrow === 'v'" d="M12 3v9H4z" fill="#333" />
                </svg>
                <svg class="ico" viewBox="0 0 20 20" v-html="icons[n.icon]" />
                <span :class="{ latin: n.latin }">{{ n.label }}</span>
                <em v-if="n.tag">{{ n.tag }}</em>
              </li>
            </ul>
            <div class="vbar">
              <svg viewBox="0 0 20 20"><path d="M5 12l5-5 5 5" fill="none" stroke="#bbb" stroke-width="1.500" /></svg>
              <div class="thumb"></div>
              <svg viewBox="0 0 20 20"><path d="M5 8l5 5 5-5" fill="none" stroke="#bbb" stroke-width="1.500" /></svg>
            </div>
          </div>
        </section>

        <section class="panel settings">
          <header class="phead">
            <h2>设置</h2>
            <span class="dock"><i class="caret wide"></i><svg viewBox="0 0 20 20" v-html="icons.pin" /></span>
          </header>
          <h3>几何</h3>
          <button class="build"><svg viewBox="0 0 20 20" v-html="icons.gridR" />全部构建</button>
          <div class="namerow">
            <label for="lbl">标签:</label>
            <input id="lbl" v-model="label" type="text" />
            <button aria-label="属性"><svg viewBox="0 0 20 20" v-html="icons.pageBtn" /></button>
          </div>
          <button class="sect"><i class="caret wide"></i>单位</button>
          <div class="body first">
            <label class="check"><input v-model="scaleUnits" type="checkbox" />更改单位时缩放值</label>
            <label class="cap" for="len">长度单位:</label>
            <div class="sel"><select id="len"><option>m</option></select><i class="caret"></i></div>
            <label class="cap" for="ang">角单位:</label>
            <div class="sel"><select id="ang"><option>度</option></select><i class="caret"></i></div>
          </div>
          <button class="sect"><i class="caret wide"></i>高级</button>
          <div class="body second">
            <label class="cap" for="rep">几何表示:</label>
            <div class="sel"><select id="rep"><option>COMSOL 内核</option></select><i class="caret"></i></div>
            <label class="cap" for="tol">默认修复容差:</label>
            <div class="sel"><select id="tol"><option>自动</option></select><i class="caret"></i></div>
            <label class="check"><input v-model="autoBuild" type="checkbox" />自动构建新操作</label>
            <label class="check"><input v-model="autoLeave" type="checkbox" />离开几何时自动构建</label>
          </div>
        </section>

        <div class="right">
          <section class="panel graphics">
            <header class="phead">
              <h2>图形</h2>
              <span class="dock"><i class="caret wide"></i><svg viewBox="0 0 20 20" v-html="icons.pin" /></span>
            </header>
            <div v-for="(row, r) in [rowA, rowB]" :key="r" class="gtools">
              <template v-for="(t, k) in row" :key="k">
                <span v-if="t === 'v'" class="drop"><i class="caret wide"></i></span>
                <i v-else-if="t === '|'" class="div"></i>
                <button v-else-if="t[0] === '*'" class="on" :aria-label="t.slice(1)">
                  <svg viewBox="0 0 20 20" v-html="icons[t.slice(1)]" /><i v-if="t === '*speaker'" class="caret wide"></i>
                </button>
                <button v-else :aria-label="t"><svg viewBox="0 0 20 20" v-html="icons[t]" /></button>
              </template>
            </div>
            <div class="canvas">
              <svg class="scene" width="695" height="480" viewBox="0 0 695 480">
                <g fill="none" stroke="#8a8f98">
                  <path d="M180 78L178 479M180 80h5M180 208h4M179 334h4M179 457h4M367 91L360 479M319 78l48 15M352 220l12 5M349 347l13 7M346 472l12 6M229 78v-2M277 77v-3M329 81v-3M347 87v-3" />
                </g>
                <path d="M185 79L228 96 225 479H182z" fill="#b7b7b7" />
                <path d="M228 96L354 91 346 479H225z" fill="#b1b1b1" />
                <path d="M185 79L307 75 354 91 228 96z" fill="#b0b0b0" />
                <path d="M185 79L307 75 354 91 228 96zM185 82L228 99 354 94M185 79L182 479M228 96L225 479M291 97L286 479M354 91L346 479" fill="none" stroke="#151515" />
                <g class="ticks">
                  <text x="382" y="101">0</text>
                  <text x="379" y="232">-0.5</text>
                  <text x="377" y="362">-1</text>
                  <text x="418" y="363">m</text>
                  <text x="48" y="389">z</text>
                  <text x="32" y="420">y</text>
                  <text x="89" y="428">x</text>
                </g>
                <path d="M51 427V400" stroke="#4d86b8" stroke-width="2" /><path d="M47 404l4-12 4 12z" fill="#4d86b8" />
                <path d="M51 427l24-2" stroke="#d0246a" stroke-width="2" /><path d="M73 420l11 5-10 4z" fill="#d0246a" />
                <path d="M51 427l-7-5" stroke="#4aa34a" stroke-width="2" /><ellipse cx="42" cy="421" rx="3" ry="4" fill="#4aa34a" />
              </svg>
              <svg class="badge" viewBox="0 0 20 20" v-html="icons.comsol" />
            </div>
          </section>

          <section class="panel log">
            <nav class="ltabs">
              <button class="cur">进度</button>
              <button>日志</button>
              <button class="closable">探针表 2<span>×</span></button>
              <span class="dock"><i class="caret wide"></i><svg viewBox="0 0 20 20" v-html="icons.pin" /></span>
            </nav>
            <div class="gtools">
              <button aria-label="插入"><svg viewBox="0 0 20 20" v-html="icons.panIn" /></button>
              <button aria-label="面板"><svg viewBox="0 0 20 20" v-html="icons.panM" /></button>
              <span class="drop"><i class="caret wide"></i></span>
              <button aria-label="管道"><svg viewBox="0 0 20 20" v-html="icons.pipe" /></button>
              <span class="drop"><i class="caret wide"></i></span>
            </div>
            <div class="logbox">
              <div class="logmain">
                <div class="vbar">
                  <svg viewBox="0 0 20 20"><path d="M6 12l4-4 4 4" fill="none" stroke="#bbb" stroke-width="1.500" /></svg>
                  <div class="thumb"></div>
                  <svg viewBox="0 0 20 20"><path d="M6 8l4 4 4-4" fill="none" stroke="#bbb" stroke-width="1.500" /></svg>
                </div>
              </div>
              <div class="hbar">
                <svg viewBox="0 0 20 20"><path d="M11 6l-4 4 4 4" fill="none" stroke="#aaa" stroke-width="1.500" /></svg>
                <div class="htrack"><div class="thumb"></div></div>
                <svg viewBox="0 0 20 20"><path d="M8 6l4 4-4 4" fill="none" stroke="#aaa" stroke-width="1.500" /></svg>
                <i class="corner"></i>
              </div>
            </div>
          </section>
        </div>
      </main>

      <footer class="status">1.02 GB | 1.27 GB</footer>

      <div class="taskbar">
        <button class="start" aria-label="开始"><svg viewBox="0 0 20 20" v-html="icons.win" /></button>
        <label class="find"><svg viewBox="0 0 20 20" v-html="icons.search" /><input type="text" placeholder="在这里输入你要搜索的内容" /></label>
        <div class="apps">
          <button v-for="(a, k) in apps" :key="k" :class="{ run: a[1], act: a[2] }" :aria-label="a[0]"><svg viewBox="0 0 20 20" v-html="icons[a[0]]" /></button>
        </div>
        <div class="power"><svg viewBox="3 -1 14 25" v-html="icons.plug" /><span>98%</span></div>
        <div class="weather"><svg viewBox="0 0 20 20" v-html="icons.cloud" />3°C</div>
        <div class="tray">
          <svg v-for="t in tray" :key="t" viewBox="0 0 20 20" v-html="icons[t]" />
          <b>中</b>
        </div>
        <div class="clock">20:18<br />2022/1/7</div>
        <svg class="note" viewBox="0 0 20 20" v-html="icons.note" />
      </div>

      <svg class="pointer" viewBox="0 0 12 19"><path d="M1 1v15l3-3 3 5 2-1-2-5h4z" fill="#fff" stroke="#333" /></svg>
    </div>

    <div class="shade"></div>
    <div class="player">
      <input type="range" min="0" max="554" value="0" aria-label="进度" />
      <div class="times"><span>0:00:01</span><span>0:09:14</span></div>
      <div class="controls">
        <div><button v-for="p in ['pSound', 'pSub']" :key="p" :aria-label="p"><svg viewBox="0 0 20 20" v-html="icons[p]" /></button></div>
        <div><button v-for="p in ['pBack', 'pPause', 'pFwd']" :key="p" :aria-label="p"><svg viewBox="0 0 20 20" v-html="icons[p]" /></button></div>
        <div class="end"><button v-for="p in ['pPen', 'pPip', 'p360', 'pShrink', 'pDots']" :key="p" :aria-label="p"><svg viewBox="0 0 20 20" v-html="icons[p]" /></button></div>
      </div>
    </div>
  </div>
</template>

<style>
body { background: #000; }
</style>

<style scoped>
* { box-sizing: border-box; }
.screen {
  position: relative; display: flex; min-height: 100vh; overflow: hidden;
  padding: 0 39px 18px 1px; background: #000; color: #1a1a1a;
  font: 14px/16px "Noto Sans", "Noto Sans CJK SC", sans-serif;
}
button { border: 0; padding: 0; margin: 0; background: none; font: inherit; color: inherit; }
svg { display: block; flex: none; overflow: visible; }
h1, h2, h3, ul { margin: 0; padding: 0; font-weight: 400; }
.latin { font-size: 15px; }
.app { position: relative; flex: 1; min-width: 0; display: flex; flex-direction: column; background: #fdfdfe; }
.caret { display: inline-block; width: 0; height: 0; border: 3px solid transparent; border-top: 5px solid #111; border-bottom: 0; flex: none; }
.caret.wide { border-width: 6px 5px 0; border-top-color: #4a4a4a; }

.titlebar { display: flex; height: 24px; background: #fff; }
.logo { width: 16px; height: 16px; margin: 0 12px 0 3px; }
.quick { display: flex; align-items: center; gap: 10px; height: 17px; padding: 0 12px 0 9px; border: 1px solid #aaa; border-width: 0 1px; }
.quick svg { width: 18px; height: 18px; }
.quick .caret { margin-left: 4px; }
.titlebar h1 { flex: 1; text-align: center; padding-left: 116px; font-size: 15px; line-height: 15px; }
.winctl { display: flex; padding-right: 4px; }
.winctl button { width: 55px; height: 15px; display: grid; place-items: center; }
.winctl svg { width: 14px; height: 14px; }

.tabs { display: flex; align-items: stretch; height: 28px; margin: 0 3px 0 4px; background: #ebecee; }
.tabs button { padding: 0 12px; line-height: 27px; }
.tabs .file { width: 66px; background: #3187c6; color: #e8f3fb; }
.tabs .home { width: 67px; background: #f9fbfd; color: #3187c6; }
.tabs .help { width: 13px; height: 14px; margin: 7px 6px 0 auto; padding: 0; background: #2f86c4; color: #fff; font-size: 11px; line-height: 14px; border-radius: 1px; }

.ribbon { position: relative; display: flex; height: 109px; margin: 0 3px 0 4px; background: #f8fafc; border: 1px solid #dcdfe2; border-top: 0; }
.group { position: relative; display: flex; flex-direction: column; padding: 7px 11px 0; border-right: 1px solid #dadde0; border-image: linear-gradient(transparent 8px, #d4d7da 8px, #d4d7da 99px, transparent 99px) 1; white-space: nowrap; }
.tools { display: flex; gap: 8px; height: 81px; }
.big { display: flex; flex-direction: column; align-items: center; min-width: 44px; }
.big svg, .glyph { width: 32px; height: 30px; margin: 3px 0 8px; }
.glyph { color: #4d9ed2; font-size: 25px; line-height: 28px; text-align: center; }
.glyph small { font-size: 21px; position: relative; top: 4px; }
.line2 { display: flex; align-items: center; gap: 4px; height: 15px; font-size: 15px; line-height: 15px; }
.smalls { display: flex; flex-direction: column; margin-top: -3px; }
.small { display: flex; align-items: center; gap: 4px; height: 27px; color: #222; }
.small svg { width: 18px; height: 16px; }
.tiny { width: 22px; color: #6aa9d3; font-size: 10px; text-align: center; }
.small.off { color: #a9a9a9; }
.small.off .tiny { color: #b5b5b5; }
.small.off .caret { border-top-color: #a0a0a0; }
.gname { text-align: center; color: #767676; line-height: 18px; }
.mask { position: absolute; right: 102px; top: -8px; z-index: 2; }
.mask svg { width: 205px; height: 124px; }

.work { flex: 1; display: grid; grid-template-columns: 469fr 643fr 697fr; gap: 6px; min-height: 0; padding: 5px 3px 3px 4px; }
.panel { display: flex; flex-direction: column; min-width: 0; background: #f8fbfd; border: 1px solid #d9dde2; }
.model { border: 1px solid #b4d4e8; }
.phead { display: flex; justify-content: space-between; height: 38px; padding: 0 2px 0 9px; }
.phead h2 { font: 300 25px/38px "Noto Sans CJK SC", sans-serif; color: #3f6184; }
.model .phead { padding-left: 8px; }
.model .phead h2 { color: #3f8fc6; }
.dock { display: flex; align-items: center; gap: 6px; color: #4a4a4a; }
.dock svg { width: 12px; height: 13px; }
.model .dock { color: #2f7cb5; }
.model .dock .caret { border-top-color: #2f7cb5; }
.ttools { display: flex; align-items: center; gap: 10px; height: 19px; padding-left: 9px; }
.ttools svg { width: 17px; height: 17px; }
.ttools .caret { margin-left: -4px; }
.treebox { position: relative; flex: 1; display: flex; margin: 6px 4px 10px; background: #fff; border: 1px solid #d8dade; min-height: 0; }
.treebox ul { flex: 1; list-style: none; }
.treebox li { display: flex; align-items: center; height: 21px; white-space: pre; }
.l0 { padding-left: 27px; }
.l1 { padding-left: 51px; }
.l2 { padding-left: 75px; }
.arrow { width: 16px; height: 16px; }
.ico { width: 19px; height: 18px; margin: 0 6px 0 5px; }
em { margin-left: 8px; font-size: 15px; }
li.selected { background: #bfe0fb; }
li.hover { background: #dff0fc; }
li.off { color: #777; }
.vbar { display: flex; flex-direction: column; width: 20px; background: #fafafa; }
.vbar svg { width: 20px; height: 20px; }
.vbar .thumb { background: #e6e6e6; }
.treebox .vbar .thumb { flex: none; height: 72%; margin: 91px 0 auto; }

h3 { padding-left: 9px; font: 300 17px/27px "Noto Sans CJK SC", sans-serif; color: #5a7ca0; }
.build { display: flex; align-items: center; gap: 7px; height: 20px; padding-left: 11px; }
.build svg { width: 14px; height: 14px; }
.namerow { display: flex; align-items: center; height: 26px; margin: 17px 6px 11px; }
.namerow label { width: 44px; }
.namerow input { flex: 1; height: 23px; padding: 0 3px; border: 1px solid #c8cbce; background: #fff; font: inherit; color: inherit; }
.namerow button { width: 24px; height: 26px; margin-left: 10px; display: grid; place-items: center; border: 1px solid #c0c3c6; border-radius: 3px; background: #f0f1f2; }
.namerow svg { width: 18px; height: 18px; }
.sect { display: flex; align-items: center; gap: 14px; height: 30px; padding-left: 7px; background: #dde7f1; font-size: 16px; }
.body { padding: 0 6px; }
.first { padding: 10px 6px 12px; }
.second { padding-top: 5px; }
.cap { display: block; margin: 7px 0 6px; line-height: 20px; }
.check { display: flex; align-items: center; gap: 5px; height: 20px; margin-bottom: 5px; }
.first .check { margin: 0; }
.second .sel:last-of-type { margin-bottom: 6px; }
.check input { appearance: none; width: 17px; height: 17px; margin: 0 1px; border: 1px solid #999; background: #eee; display: grid; place-items: center; }
.check input:checked::after { content: ""; width: 6px; height: 10px; margin-top: -3px; border: solid #222; border-width: 0 2px 2px 0; transform: rotate(40deg); }
.sel { display: grid; align-items: center; }
.sel > * { grid-area: 1 / 1; }
.sel select { appearance: none; width: 100%; height: 26px; padding: 0 15px; border: 1px solid #cfd1d3; border-radius: 3px; background: linear-gradient(#efeff0, #e6e6e7); font: inherit; color: inherit; }
.sel .caret { justify-self: end; margin-right: 8px; border-width: 5px 4px 0; pointer-events: none; }

.right { display: flex; flex-direction: column; gap: 6px; min-width: 0; }
.graphics { flex: 1; min-height: 0; }
.gtools { display: flex; align-items: center; height: 24px; padding-left: 3px; }
.graphics .gtools { flex: none; }
.phead + .gtools { margin-top: -3px; }
.gtools button { width: 26px; height: 24px; display: flex; align-items: center; justify-content: center; flex: none; }
.gtools svg { width: 17px; height: 17px; }
.drop { width: 22px; display: flex; padding-left: 4px; }
.div { width: 1px; height: 20px; margin: 0 5px 0 4px; background: #d5d8db; }
.gtools .on { width: 22px; height: 22px; margin: 0 2px; border: 1px solid #5c86b0; border-radius: 2px; background: #b5d3f0; }
.gtools .on:has(.caret) { width: 42px; gap: 5px; margin: 0 4px 0 2px; background: linear-gradient(#8fbbe6, #d6e8f8); }
.canvas { position: relative; flex: 1; min-height: 0; overflow: hidden; background: linear-gradient(#f8fbfd 16%, #f3f7fe 28%, #ecf3fe 70%, #e4f1fb 96%, #e3efff); }
.scene { position: absolute; left: 0; top: 0; }
.ticks { font-size: 14px; fill: #1a1a1a; }
.badge { position: absolute; right: 8px; top: 9px; width: 20px; height: 22px; }

.log { height: 203px; }
.ltabs { display: flex; gap: 8px; height: 35px; padding: 5px 2px 0 4px; border-bottom: 1px solid #dcdfe2; font-size: 16px; }
.ltabs button { padding: 0 5px; height: 29px; background: #e9eaea; white-space: nowrap; }
.ltabs .cur { height: 30px; background: #f8fbfd; border: 1px solid #d5d8db; border-bottom: 0; color: #33629a; }
.ltabs .closable span { margin: 0 3px 0 9px; color: #ccc; }
.ltabs .dock { margin-left: auto; }
.log .gtools { margin-top: 6px; }
.logbox { flex: 1; display: flex; flex-direction: column; margin: 4px 5px 5px 4px; border: 1px solid #ccd0d4; }
.logmain { flex: 1; display: flex; justify-content: flex-end; }
.logbox .vbar .thumb { height: 18px; margin-bottom: auto; background: #dfe1e2; }
.hbar { display: flex; height: 20px; background: #f4f4f4; }
.hbar svg { width: 20px; height: 20px; }
.htrack { flex: 1; }
.hbar .thumb { width: 71%; height: 20px; background: #d2d2d2; }
.corner { width: 20px; background: #e4e4e4; }

.status { height: 34px; padding: 3px 689px 0 0; text-align: right; font-size: 14px; line-height: 34px; background: #fafcfb; }
.taskbar { display: flex; align-items: center; height: 48px; background: #d3d8da; white-space: nowrap; overflow: hidden; }
.start { width: 58px; display: flex; padding-left: 19px; }
.start svg { width: 20px; height: 20px; }
.find { display: flex; align-items: center; gap: 14px; width: 407px; height: 48px; padding-left: 13px; background: #fafafa; }
.find svg { width: 19px; height: 20px; }
.find input { flex: 1; min-width: 0; border: 0; padding: 0; background: none; font: 18px/24px "Noto Sans CJK SC", sans-serif; }
.find input::placeholder { color: #444; opacity: 1; }
.apps { display: flex; gap: 9px; padding: 0 8px 0 9px; }
.apps button { width: 50px; height: 48px; display: grid; place-items: center; }
.apps svg { width: 28px; height: 28px; }
.apps .run { border-bottom: 3px solid #1565a6; padding-top: 3px; }
.apps .act { width: 58px; margin: 0 -4px; background: #eef1f2; }
.apps .act svg { width: 20px; height: 20px; }
.power { display: flex; align-items: center; gap: 1px; margin-left: 10px; }
.power svg { width: 14px; height: 24px; }
.power span { width: 42px; height: 22px; border: 2px solid #eee; outline: 1px solid #777; background: #1c8f45; color: #fff; text-align: center; line-height: 18px; }
.weather { display: flex; align-items: center; gap: 11px; margin-left: 34px; font-size: 17px; }
.weather svg { width: 27px; height: 27px; }
.tray { display: flex; align-items: center; gap: 9px; margin-left: 19px; }
.tray svg { width: 20px; height: 20px; }
.tray b { font-size: 19px; font-weight: 500; }
.clock { margin-left: auto; text-align: center; font-size: 15px; line-height: 22px; }
.note { width: 22px; height: 20px; margin: 0 28px 0 26px; }
.pointer { position: absolute; left: 321px; top: 358px; width: 12px; height: 19px; }

.shade { position: absolute; left: 0; right: 0; bottom: 0; height: 200px; background: linear-gradient(transparent, rgba(0, 0, 0, .2) 48px, rgba(0, 0, 0, .42) 97px, rgba(0, 0, 0, .52) 134px, rgba(0, 0, 0, .6) 182px); }
.player { position: absolute; left: -21px; right: 17px; bottom: 0; padding-bottom: 22px; color: #fff; }
.player input { display: block; appearance: none; width: calc(100% - 10px); height: 16px; margin: 0 0 0 10px; background: linear-gradient(transparent 6px, rgba(255, 255, 255, .18) 6px, rgba(255, 255, 255, .18) 9px, transparent 9px); }
.player input::-webkit-slider-thumb { appearance: none; width: 16px; height: 16px; border: 2px solid #f0a848; border-radius: 50%; background: transparent; }
.times { display: flex; justify-content: space-between; margin-top: 2px; font-size: 12px; line-height: 20px; }
.times span:first-child { margin-left: -4px; }
.controls { display: grid; grid-template-columns: 1fr auto 1fr; height: 50px; }
.controls div { display: flex; }
.controls .end { justify-content: flex-end; }
.controls button { width: 50px; height: 50px; display: grid; place-items: center; }
.controls svg { width: 20px; height: 20px; }
</style>
